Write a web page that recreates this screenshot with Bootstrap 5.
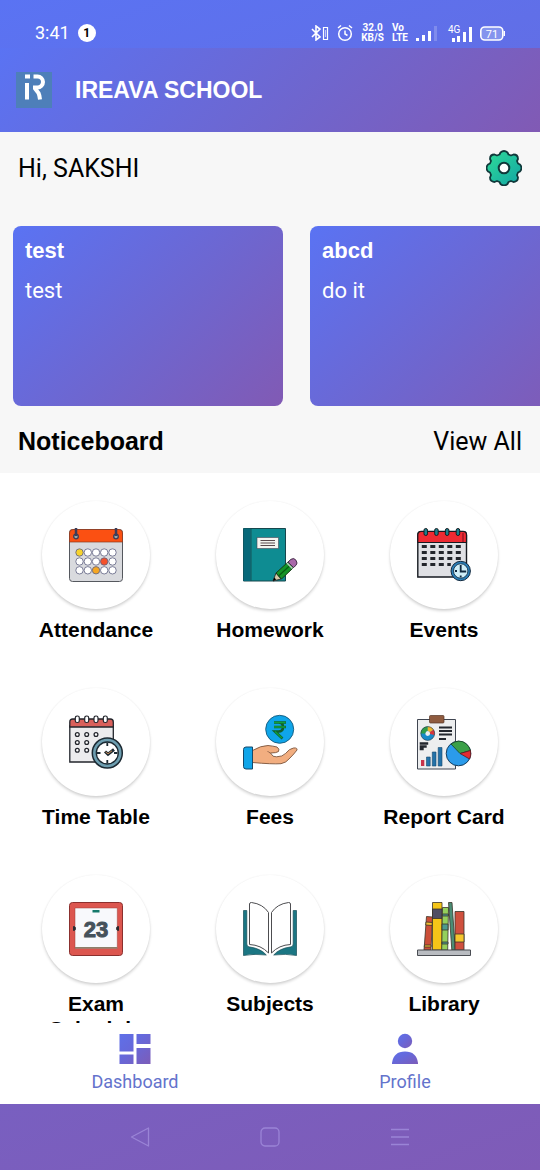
<!DOCTYPE html>
<html lang="en">
<head>
<meta charset="utf-8">
<meta name="viewport" content="width=device-width, initial-scale=1">
<title>IREAVA SCHOOL</title>
<link href="https://cdn.jsdelivr.net/npm/bootstrap@5.3.0/dist/css/bootstrap.min.css" rel="stylesheet">
<style>
:root { --brand: linear-gradient(135deg, #5a73f3 0%, #6e66cf 55%, #815ab4 100%); }
body { font-family: Roboto, sans-serif; color: #000; background: linear-gradient(160deg, #5a73f3 0%, #6e66cf 50%, #7f5bb7 100%); }
.arial { font-family: "Liberation Sans", Arial, sans-serif; font-weight: 700; }
.statusbar { padding: 18px 35px 0; height: 48px; line-height: 30px; font-size: 18px; }
.count-dot { width: 18px; height: 18px; border-radius: 50%; font-size: 12px; }
.tiny-stack { font-size: 10px; line-height: 10px; font-weight: 700; text-align: center; }
.appbar { background: var(--brand); padding: 24px 16px; gap: 23px; }
.appbar h1 { font-size: 23px; line-height: 36px; }
.intro { background: #f7f7f7; }
.greeting { padding: 18px 18px 38px; font-size: 25px; line-height: 38px; }
.notices { gap: 27px; padding: 0 13px; overflow-x: auto; scrollbar-width: none; }
.notices::-webkit-scrollbar { display: none; }
.notice-tile { flex: 0 0 270px; height: 180px; border-radius: 8px; background: var(--brand); padding: 12px; color: #fff; font-size: 22px; line-height: 28px; }
.notice-tile h2 { font-size: 22px; line-height: 26px; margin-bottom: 13px; }
.notice-head { padding: 18px 18px 14px; font-size: 25px; line-height: 35px; }
.notice-head h2 { font-size: 25px; line-height: 35px; }
.tiles { padding: 28px 9px 0; display: grid; grid-template-columns: repeat(3, 1fr); row-gap: 46px; grid-auto-rows: 141px; }
.tile { font-size: 21px; line-height: 25px; color: #000; text-decoration: none; }
.disc { width: 108px; height: 108px; border-radius: 50%; background: #fff; margin-bottom: 8px; box-shadow: 0 2px 3px rgba(0,0,0,.17), 0 0 2px rgba(0,0,0,.06); }
.disc svg { width: 54px; height: 54px; overflow: visible; }
.tile span:last-child { max-width: 132px; }
.tabs a { padding: 10px 0 11px; color: #6473cc; font-size: 18px; line-height: 22px; text-decoration: none; }
.tabs svg { margin-bottom: 6px; }
.sysbar { height: 66px; padding: 0 75px; }
.sysbar button { background: none; border: 0; padding: 0; line-height: 0; }
</style>
</head>
<body>
<div class="d-flex flex-column vh-100">

  <div class="statusbar d-flex align-items-center justify-content-between text-white">
    <div class="d-flex align-items-center gap-2">
      <span>3:41</span>
      <span class="count-dot bg-white text-black fw-bold d-flex align-items-center justify-content-center">1</span>
    </div>
    <div class="d-flex align-items-center gap-2">
      <svg width="18" height="16" viewBox="0 0 18 16" fill="none" stroke="#fff" stroke-width="1.6"><path d="M1 4l8 8-4 3V1l4 3-8 8"/><path d="M12.500 2.500h4v12h-4z" stroke-width="1.200"/><path d="M14.500 5v7" stroke-width="1.200" opacity=".6"/></svg>
      <svg width="16" height="18" viewBox="0 0 16 18" fill="none" stroke="#fff" stroke-width="1.500"><circle cx="8" cy="10" r="6.300"/><path d="M8 6.500V10l2.500 1.500M1 4l3-2.500M15 4l-3-2.500"/></svg>
      <div class="tiny-stack"><div>32.0</div><div>KB/S</div></div>
      <div class="tiny-stack text-start"><div>Vo</div><div>LTE</div></div>
      <svg width="23" height="17" viewBox="0 0 23 17" fill="#fff"><path d="M0 13h3v3H0zM6 10h3v6H6zM12 6h3v10h-3z"/><path d="M18 1h3v15h-3z" opacity=".2"/></svg>
      <svg width="25" height="19" viewBox="0 0 25 19" fill="#fff"><path d="M5 14h3v4H5zM10 12h3v6h-3zM16 8h3v10h-3zM22 3h3v15h-3z"/><text x="1" y="9" font-size="10">4G</text></svg>
      <svg width="25" height="15" viewBox="0 0 25 15"><rect x=".800" y="1" width="22" height="13" rx="4" fill="#8494ee" stroke="#fff" stroke-width="1.600"/><path d="M24.300 5v5" stroke="#fff" stroke-width="1.400"/><text x="12" y="11.500" font-size="11" text-anchor="middle" fill="#fff">71</text></svg>
    </div>
  </div>

  <header class="appbar d-flex align-items-center text-white">
    <svg width="36" height="36" viewBox="0 0 36 36" aria-hidden="true"><rect width="36" height="36" fill="#4e7fb9"/><g fill="none" stroke="#fff" stroke-width="4"><path d="M11 11v16.500M9 4.500h5"/><path d="M17.500 4.500h4a5 5 0 0 1 0 11h-4.500M19 16.500l3.500 4.500q1 2 1.500 6.500"/></g></svg>
    <h1 class="arial m-0">IREAVA SCHOOL</h1>
  </header>

  <section class="intro">
    <div class="greeting d-flex justify-content-between">
      <span>Hi, SAKSHI</span>
      <button class="btn p-0 border-0 lh-1 align-self-start" aria-label="Settings">
        <svg class="d-block" width="36" height="36" viewBox="0 0 36 36"><defs><linearGradient id="gear" x1="0" y1="0" x2="1" y2="1"><stop offset="0" stop-color="#2fdc98"/><stop offset="1" stop-color="#12a4a4"/></linearGradient></defs>
        <path d="M14.500 2.500q3.500-3 7 0l1 2 2.500 1 2.500-1q4.500 0 4.500 4.500l-1 2 1 2.500 2 1q3 3.500 0 7l-2 1-1 2.500 1 2.500q0 4-4.500 4.500l-2.500-1-2.500 1-1 2q-3.500 3-7 0l-1-2-2.500-1-2.500 1q-4.500-.5-4.500-4.500l1-2.500-1-2.500-2-1q-3-3.500 0-7l2-1 1-2.500-1-2q0-4.500 4.500-4.500l2.500 1 2.500-1z" fill="url(#gear)" stroke="#10383a" stroke-width="1.800" stroke-linejoin="round"/><circle cx="18" cy="18" r="5.300" fill="#fff" stroke="#10383a" stroke-width="2"/></svg>
      </button>
    </div>
    <div class="notices d-flex">
      <article class="notice-tile"><h2 class="arial">test</h2><p class="m-0">test</p></article>
      <article class="notice-tile"><h2 class="arial">abcd</h2><p class="m-0">do it</p></article>
    </div>
    <div class="notice-head d-flex justify-content-between">
      <h2 class="arial m-0">Noticeboard</h2>
      <a href="#" class="text-black text-decoration-none">View All</a>
    </div>
  </section>

  <main class="flex-grow-1 overflow-hidden bg-white" style="min-height:0">
    <div class="tiles arial">
      <a href="#" class="tile d-flex flex-column align-items-center text-center">
        <span class="disc d-flex flex-shrink-0 align-items-center justify-content-center"><svg viewBox="0 0 54 54">
          <rect x=".5" y="1.500" width="53" height="52" rx="3" fill="#d9dade" stroke="#55585e"/><path d="M.5 14V5q0-3.500 3.500-3.500h46q3.500 0 3.500 3.500v9z" fill="#fb5012" stroke="#8b3a20" stroke-width=".7"/>
          <g fill="#9aa" stroke="#3c3d58" stroke-width="1.300"><circle cx="7" cy="8.500" r="2.300"/><circle cx="47" cy="8.500" r="2.300"/><path d="M7 0v8M47 0v8" stroke-width="2.500"/></g>
          <g fill="#fff" stroke="#5d6080" stroke-width=".8"><circle cx="10.500" cy="24.500" r="3.700" fill="#f7d32e"/><circle cx="18.800" cy="24.500" r="3.700"/><circle cx="27" cy="24.500" r="3.700"/><circle cx="35.200" cy="24.500" r="3.700"/><circle cx="43.500" cy="24.500" r="3.700"/><circle cx="10.500" cy="33.500" r="3.700"/><circle cx="18.800" cy="33.500" r="3.700"/><circle cx="27" cy="33.500" r="3.700"/><circle cx="35.200" cy="33.500" r="3.700" fill="#f4502a"/><circle cx="43.500" cy="33.500" r="3.700"/><circle cx="10.500" cy="42.300" r="3.700"/><circle cx="18.800" cy="42.300" r="3.700"/><circle cx="27" cy="42.300" r="3.700" fill="#f5a623"/><circle cx="35.200" cy="42.300" r="3.700"/><circle cx="43.500" cy="42.300" r="3.700"/></g></svg></span>
        <span>Attendance</span></a>
      <a href="#" class="tile d-flex flex-column align-items-center text-center">
        <span class="disc d-flex flex-shrink-0 align-items-center justify-content-center"><svg viewBox="0 0 54 54">
          <path d="M.5.5h42v52.500H.5z" fill="#0e8c92" stroke="#17474d"/><path d="M.5.5h7v52.500h-7z" fill="#07697a"/><path d="M8 .5V53" stroke="#17474d" stroke-width=".8"/>
          <path d="M14 9.500h21.500v11H14z" fill="#f4f4f0" stroke="#445" stroke-width=".6"/><path d="M17.500 12.500h14.500M17.500 15h14.500M17.500 17.500h14.500" stroke="#5b4a4e" stroke-width="1.200"/>
          <path d="M30 53l3-8 5 6z" fill="#d6c8a6" stroke="#222" stroke-width=".8"/><path d="M30 53l1.200-3.500 2 2z"/><path d="M33 45l12-11 5.500 5.500L38.500 51z" fill="#149427" stroke="#173d18"/><path d="M35.500 48l12-11" stroke="#075b12" stroke-width="1.200"/><path d="M45 34l3-2.700q3-2 5 1t0 5l-2.500 2.200z" fill="#a869a9" stroke="#452f49"/><path d="M44 35l5.500 5.500" stroke="#bfc9c4" stroke-width="1.500"/></svg></span>
        <span>Homework</span></a>
      <a href="#" class="tile d-flex flex-column align-items-center text-center">
        <span class="disc d-flex flex-shrink-0 align-items-center justify-content-center"><svg viewBox="0 0 54 54">
          <path d="M.8 14V7q0-3.500 3.500-3.500H46q3.500 0 3.500 3.500v42H.8z" fill="#dfe0e4" stroke="#161a20" stroke-width="1.400"/><path d="M.8 14.500V7q0-3.500 3.500-3.500H46q3.500 0 3.500 3.500v7.500z" fill="#ee2a32" stroke="#161a20" stroke-width="1.200"/><path d="M46 5v9" stroke="#8a1220" stroke-width="1.200"/>
          <g fill="#19808c" stroke="#161a20"><rect x="7" y=".5" width="3.500" height="7" rx="1.700"/><rect x="17.700" y=".5" width="3.500" height="7" rx="1.700"/><rect x="28.400" y=".5" width="3.500" height="7" rx="1.700"/><rect x="39.200" y=".5" width="3.500" height="7" rx="1.700"/></g>
          <g stroke="#22252b" stroke-width="3" stroke-dasharray="5 3.500"><path d="M4.800 18.500h40M4.800 24.500h40M4.800 30.500h40M4.800 36.500h29"/></g>
          <circle cx="43.700" cy="43" r="9.700" fill="#2b7fb8" stroke="#10283e"/><circle cx="43.700" cy="43" r="7.200" fill="#cfeef8" stroke="#10283e" stroke-width=".8"/><path d="M43.700 37v6.500h5.500M38 43h2M43.700 47.500v2" fill="none" stroke="#10283e" stroke-width="1.800"/></svg></span>
        <span>Events</span></a>

      <a href="#" class="tile d-flex flex-column align-items-center text-center">
        <span class="disc d-flex flex-shrink-0 align-items-center justify-content-center"><svg viewBox="0 0 54 54">
          <path d="M.8 11h43.500v36H.8z" fill="#ececee" stroke="#23262d" stroke-width="1.300"/><path d="M.8 12V7q0-3 3-3h37.500q3 0 3 3v5z" fill="#d9605b" stroke="#23262d" stroke-width="1.300"/>
          <g fill="#fff" stroke="#23262d" stroke-width="1.200"><rect x="6.300" y="1" width="4" height="6.500" rx="1.800"/><rect x="15.700" y="1" width="4" height="6.500" rx="1.800"/><rect x="25" y="1" width="4" height="6.500" rx="1.800"/><rect x="34.300" y="1" width="4" height="6.500" rx="1.800"/></g>
          <g fill="#fff" stroke="#23262d" stroke-width="1.300"><circle cx="8.300" cy="19.500" r="1.900"/><circle cx="17.700" cy="19.500" r="1.900"/><circle cx="27" cy="19.500" r="1.900"/><circle cx="8.300" cy="27.500" r="1.900"/><circle cx="17.700" cy="27.500" r="1.900"/><circle cx="8.300" cy="35.300" r="1.900"/><circle cx="17.700" cy="35.300" r="1.900"/></g>
          <circle cx="38.300" cy="38" r="15" fill="#6d9eb0" stroke="#1c2a33" stroke-width="1.500"/><circle cx="38.300" cy="38" r="11" fill="#fff" stroke="#1c2a33" stroke-width="1.300"/><path d="M38.300 27.500v3.500M38.300 45v3.500M28 38h3.500M45 38h3.500" stroke="#1c2a33" stroke-width="1.800"/><path d="M36 36.500l3 2.700 6-4.700" fill="none" stroke="#1c2a33" stroke-width="3"/><path d="M36.500 36.800l2.500 2 4-3" fill="none" stroke="#c98a54"/></svg></span>
        <span>Time Table</span></a>
      <a href="#" class="tile d-flex flex-column align-items-center text-center">
        <span class="disc d-flex flex-shrink-0 align-items-center justify-content-center"><svg viewBox="0 0 54 54">
          <circle cx="36.700" cy="14.300" r="14" fill="#0fa5e9" stroke="#14597c" stroke-width=".9"/><path d="M31 7.500h12M31 12h12M32 7.500h3.500q4.500 0 4.500 4.500t-4.500 4.500H32l7.500 7" fill="none" stroke="#12602c" stroke-width="2.600"/><path d="M31 7.500h11.500M31 12h11.500M32 16.500l7 6.500" fill="none" stroke="#10a03a" stroke-width="1.400"/>
          <path d="M9.500 35.500Q18 30.500 25 30.500q5 .5 9 1.500 3 2 1.500 4.500-2 1.500-8 1.500 2 4.500 6 3.800 6 0 9-3.300 4-5 8-5.500 4-.5 3.500 2-3 4-7 8-4 5-9 5.700-9 .6-28.500-1.200z" fill="#f2ae80" stroke="#7c553c" stroke-width=".9"/><path d="M27.500 38q-2-.5-3-2" fill="none" stroke="#7c553c" stroke-width=".8"/>
          <path d="M3 32h6.500v22H3q-2.500 0-2.500-2.500V34.500Q.5 32 3 32z" fill="#0fa5e9" stroke="#14496a"/></svg></span>
        <span>Fees</span></a>
      <a href="#" class="tile d-flex flex-column align-items-center text-center">
        <span class="disc d-flex flex-shrink-0 align-items-center justify-content-center"><svg viewBox="0 0 54 54">
          <path d="M.5 4.500h38V54H.5z" fill="#edeeef" stroke="#3f4550"/><rect x="12.500" y=".5" width="14.500" height="7.500" rx="1" fill="#8f5b3f" stroke="#553525" stroke-width=".7"/>
          <g fill="none" stroke-width="4.500"><circle cx="10.700" cy="18.500" r="4.700" stroke="#168ac9"/><path d="M6 18.500a4.700 4.700 0 0 1 4.700-4.700" stroke="#2f9e48"/><path d="M10.700 13.800a4.700 4.700 0 0 1 4 2.200" stroke="#f0b52e"/><path d="M14.700 16a4.700 4.700 0 0 1 .6 3.500" stroke="#d8353b"/></g><circle cx="10.700" cy="18.500" r="6.900" fill="none" stroke="#2a3440" stroke-width=".6"/>
          <path d="M22 12.500h13M22 16h13M22 19.500h13M22 24h7" stroke="#23272e" stroke-width="2.200"/><path d="M2.700 28.500h8.500M2.700 31.500h7M2.700 34h4" stroke="#23272e" stroke-width="2.500"/>
          <path d="M4 45h3.300v6H4z" fill="#c8334a"/><path d="M9.500 42h3.700v9H9.500zM15.300 37H19v14h-3.700zM21.200 32.500H25V51h-3.800z" fill="#2372a9" stroke="#17486c" stroke-width=".6"/>
          <circle cx="41.500" cy="38.500" r="12.300" fill="#2b9bea" stroke="#173d5c"/><path d="M43 38.500l-9-9.500q8-5.500 15-.5 3 2.500 4.500 7z" fill="#3ba048" stroke="#1b4023" stroke-width=".8"/><path d="M43 38.500l10.500-3q1 5-1 8.500z" fill="#e42b31" stroke="#571b20" stroke-width=".8"/></svg></span>
        <span>Report Card</span></a>

      <a href="#" class="tile d-flex flex-column align-items-center text-center">
        <span class="disc d-flex flex-shrink-0 align-items-center justify-content-center"><svg viewBox="0 0 54 54">
          <rect x=".5" y=".5" width="53" height="53" rx="3" fill="#dc564f" stroke="#8b302e"/><path d="M6 6h42.300v40.500H6z" fill="#f8f9fc" stroke="#9c3c37" stroke-width=".5"/><path d="M6 45h42.300v1.500H6z" fill="#8c806b"/><path d="M23.500 8h7v2.500h-7z" fill="#15796b"/><path d="M4.500 24.500q2 0 2 2t-2 2zM49.500 24.500q-2 0-2 2t2 2z" fill="#272a30" stroke="#272a30"/>
          <text x="27" y="35" text-anchor="middle" font-family="Liberation Sans, Arial, sans-serif" font-weight="700" font-size="22" fill="#46525b" stroke="#46525b">23</text></svg></span>
        <span>Exam Schedule</span></a>
      <a href="#" class="tile d-flex flex-column align-items-center text-center">
        <span class="disc d-flex flex-shrink-0 align-items-center justify-content-center"><svg viewBox="0 0 54 54">
          <path d="M.5 8.500h3.300V42q0 3 3 3 11 1.500 16.500 8Q11 51.500.5 53.500zM53.500 8.500h-3.300V42q0 3-3 3-11 1.500-16.500 8 12.300-1.500 22.800.5z" fill="#1b7683" stroke="#174e58" stroke-width=".7"/><path d="M6.500 42.500V2q0-1.500 2-1.500Q20 2 25.500 10.500V51Q18 43 6.500 42.500zM47.500 42.500V2q0-1.500-2-1.500Q34 2 28.500 10.500V51Q36 43 47.500 42.500z" fill="#fff" stroke="#4d4d50"/></svg></span>
        <span>Subjects</span></a>
      <a href="#" class="tile d-flex flex-column align-items-center text-center">
        <span class="disc d-flex flex-shrink-0 align-items-center justify-content-center"><svg viewBox="0 0 54 54">
          <g stroke="#3a3328" stroke-width=".8"><path d="M9.500 14.500l6 .5-1.500 33H7z" fill="#cc4f38"/><path d="M9 20l6.300.5-.3 3-6.300-.5zM7.500 43h6.500v2H7.300z" fill="#f0bd32"/>
          <path d="M15.500.5h9.500v47.500h-9.500z" fill="#f5c518"/><path d="M15.500 7h9.500v9.500h-9.500z" fill="#514e63"/>
          <path d="M25.500 5.500h6l-.8 42.500h-6z" fill="#94d05c"/><path d="M25.400 12h6v2h-6zM25 22h6v6h-6zM25 40h6v2h-6z" fill="#4c9a8d"/>
          <path d="M31.500.5h3.500l3.300 47.500h-3.500z" fill="#4b8d75"/><path d="M38 9.500h9V48h-9z" fill="#cf503e"/><path d="M38 32h9v8h-9z" fill="#f5c62d"/></g><path d="M.5 48h53v5.500H.5z" fill="#b9bcc1" stroke="#4a4d53"/></svg></span>
        <span>Library</span></a>
    </div>
  </main>

  <nav class="tabs d-flex bg-white">
    <a href="#" class="col d-flex flex-column align-items-center"><svg width="32" height="32" viewBox="0 0 32 32"><defs><linearGradient id="tab" x1="0" y1="0" x2="1" y2="1"><stop offset="0" stop-color="#5f70e8"/><stop offset=".4" stop-color="#6569dc"/><stop offset="1" stop-color="#7c5cb8"/></linearGradient></defs><path fill="url(#tab)" d="M.5 1h14v17.500H.5zM.5 21.500h14V31H.5zM17.500 1h14v10h-14zM17.500 15h14v16h-14z"/></svg>Dashboard</a>
    <a href="#" class="col d-flex flex-column align-items-center"><svg width="32" height="32" viewBox="0 0 32 32" fill="url(#tab)"><circle cx="16" cy="8" r="7.200"/><path d="M3 31v-1Q4.500 18.500 16 18.500T29 30v1z"/></svg>Profile</a>
  </nav>

  <div class="sysbar d-flex align-items-center justify-content-around">
    <button aria-label="Back"><svg width="20" height="22" viewBox="0 0 20 22" fill="none" stroke="#9a84d6" stroke-width="1.300"><path d="M18.500 2v18L1.500 11z" stroke-linejoin="round"/></svg></button>
    <button aria-label="Home"><svg width="20" height="20" viewBox="0 0 20 20" fill="none" stroke="#9a84d6" stroke-width="1.300"><rect x="1" y="1" width="18" height="18" rx="4"/></svg></button>
    <button aria-label="Recent apps"><svg width="20" height="18" viewBox="0 0 20 18" stroke="#9a84d6" stroke-width="1.500"><path d="M1 1.500h18M1 9h18M1 16.500h18"/></svg></button>
  </div>
</div>
<script src="https://cdn.jsdelivr.net/npm/bootstrap@5.3.0/dist/js/bootstrap.bundle.min.js"></script>
</body>
</html>
